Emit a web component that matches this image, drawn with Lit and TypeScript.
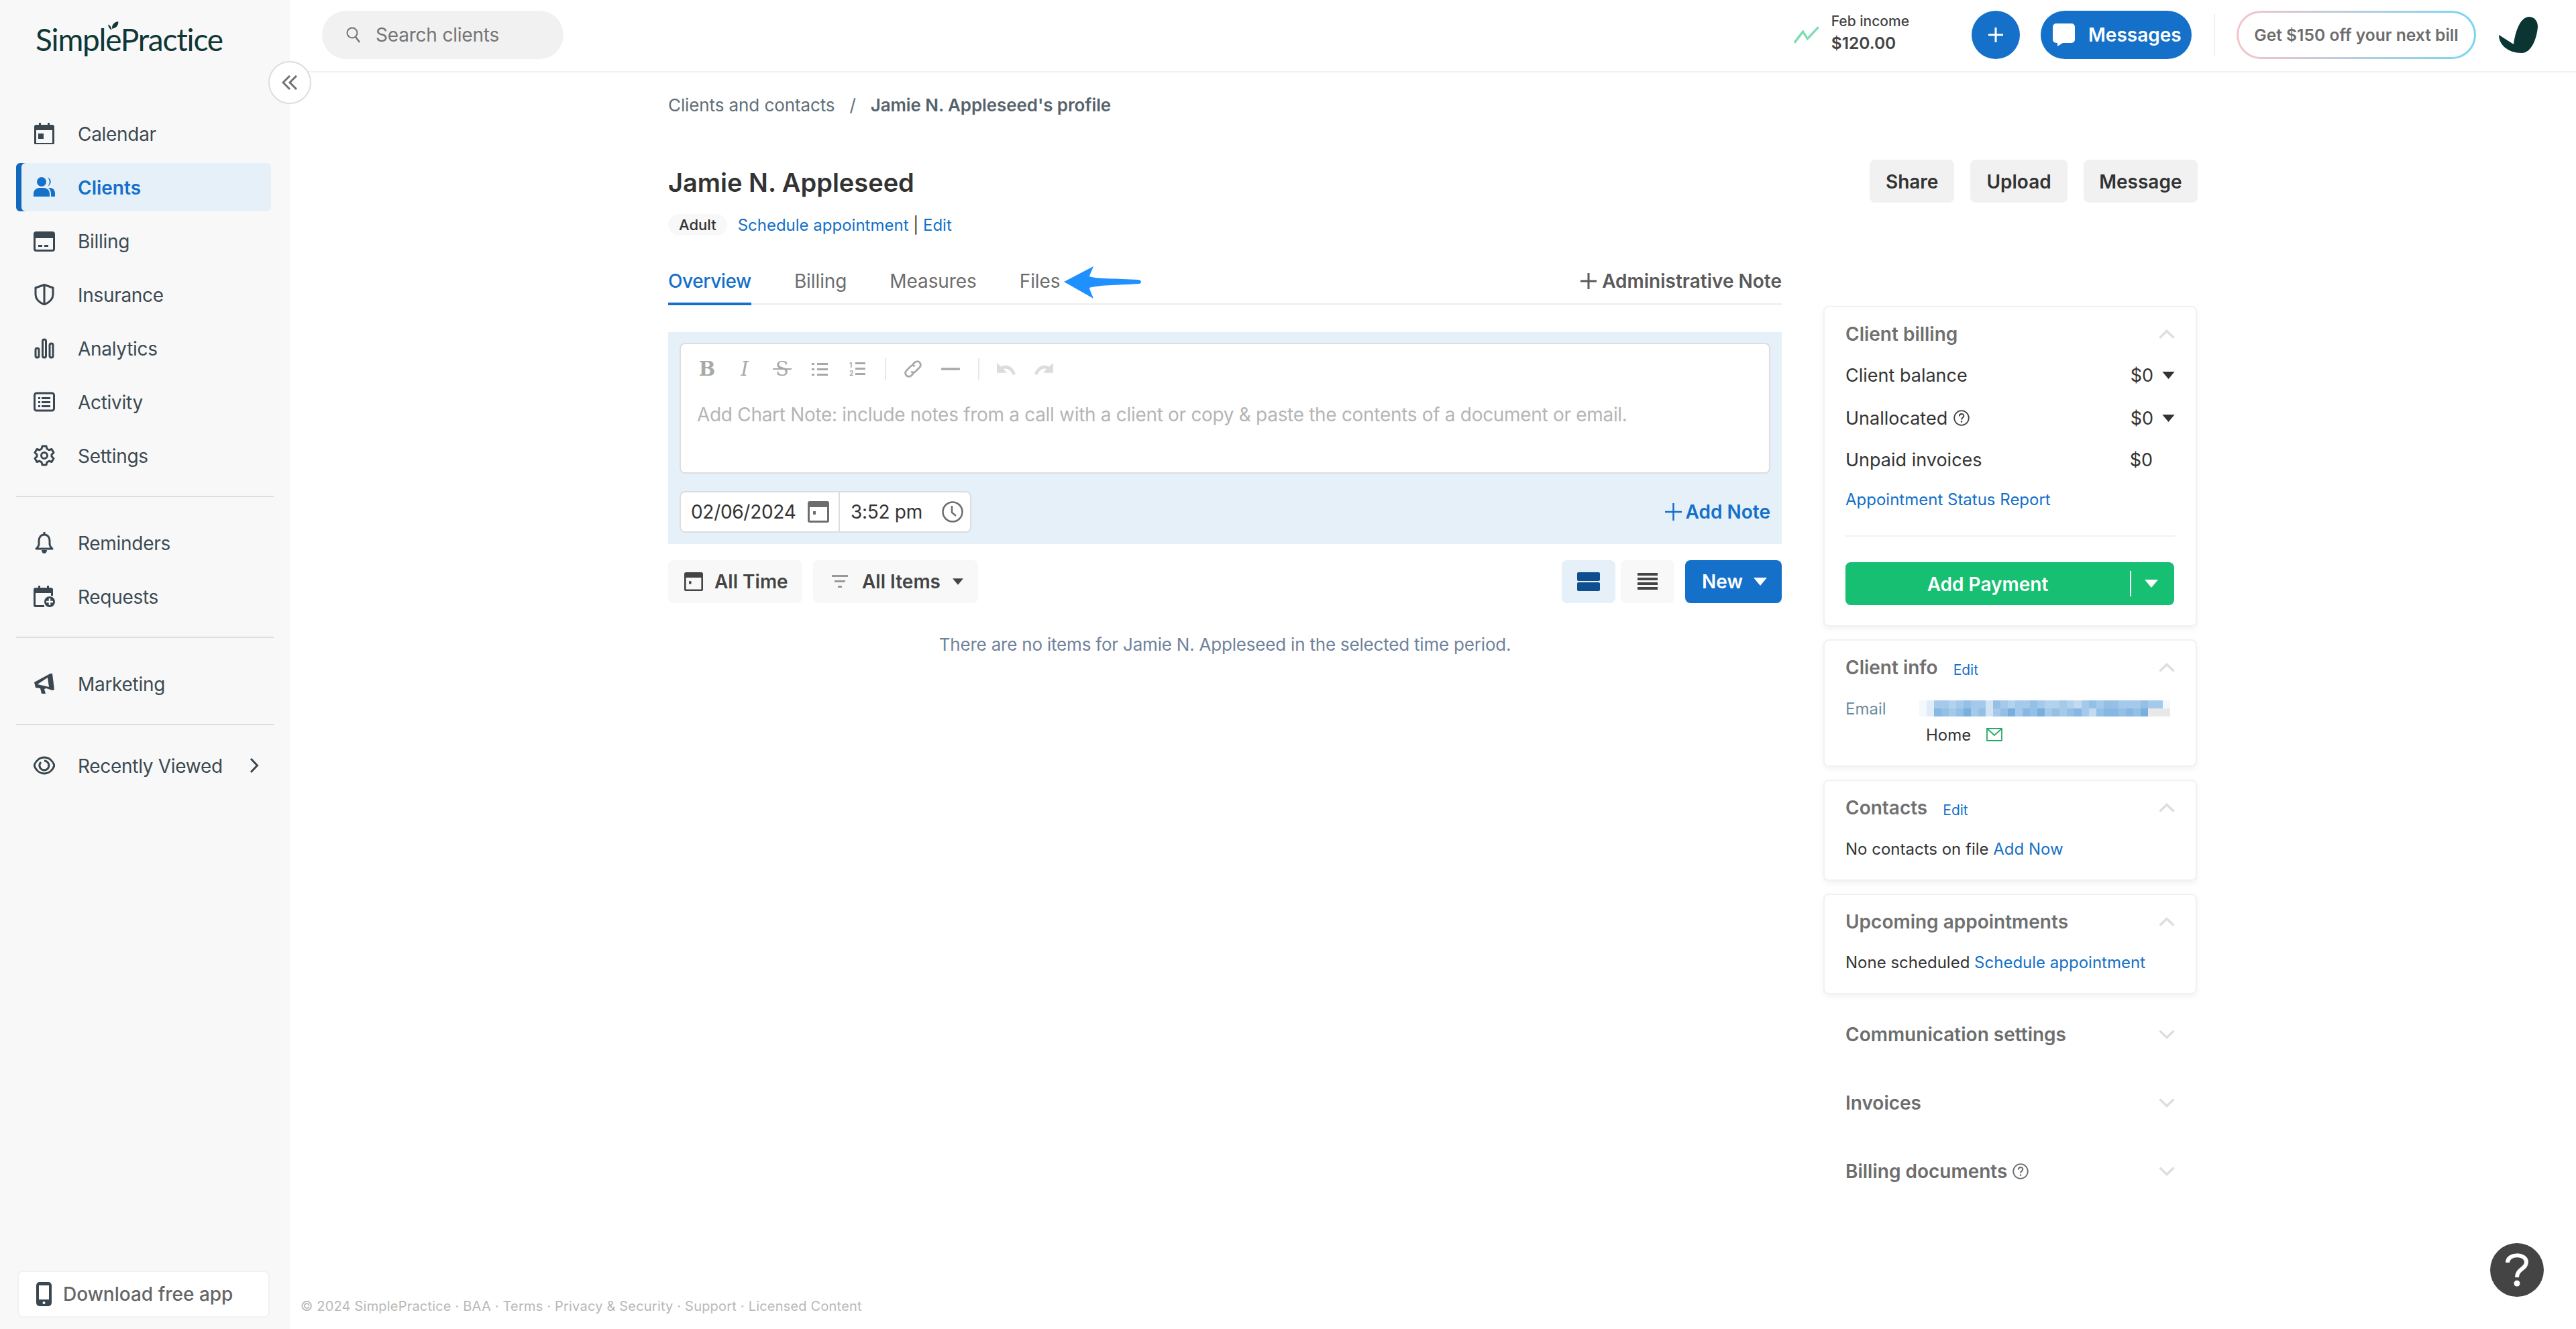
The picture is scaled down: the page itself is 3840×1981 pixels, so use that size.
import { LitElement, html, css, svg } from "lit";
import { customElement } from "lit/decorators.js";

const I = {
  calendar: svg`<path fill="currentColor" d="M8 0h3v3h10V0h3v3h4a3 3 0 0 1 3 3v24a3 3 0 0 1-3 3H4a3 3 0 0 1-3-3V6a3 3 0 0 1 3-3h4zM4 11v18.500a.5.500 0 0 0 .5.500h23a.5.500 0 0 0 .5-.5V11zm3 5h8v8H7z"/>`,
  clients: svg`<g fill="currentColor"><circle cx="12" cy="8" r="7"/><path d="M21 1.400a7 7 0 0 1 0 13.200 9 9 0 0 0 0-13.200z"/><path d="M0 28v-2c0-5.500 4-9 9-9h6c5 0 9 3.500 9 9v4H1a1 1 0 0 1-1-2z"/><path d="M22 17h2c5 0 8 3.500 8 8v5h-6v-4c0-3.500-1.500-7-4-9z"/></g>`,
  billing: svg`<path fill="currentColor" fill-rule="evenodd" d="M4 2h24a4 4 0 0 1 4 4v22a4 4 0 0 1-4 4H4a4 4 0 0 1-4-4V6a4 4 0 0 1 4-4zm-1 10v16a1 1 0 0 0 1 1h24a1 1 0 0 0 1-1V12zm4 10h6v3H7zm9 0h6v3h-6z"/>`,
  shield: svg`<path fill="none" stroke="currentColor" stroke-width="3" stroke-linejoin="round" d="M16 1.500 29 6v10c0 7-6 12-13 15C9 28 3 23 3 16V6z"/><path stroke="currentColor" stroke-width="3" d="M16 2v28"/>`,
  analytics: svg`<g fill="none" stroke="currentColor" stroke-width="3"><rect x="3" y="16" width="5" height="14" rx="2.500"/><rect x="13.500" y="3" width="5" height="27" rx="2.500"/><rect x="24" y="9" width="5" height="21" rx="2.500"/></g>`,
  activity: svg`<rect x="1.500" y="3" width="29" height="26" rx="3" fill="none" stroke="currentColor" stroke-width="3"/><path fill="currentColor" d="M7 9h3v3H7zm5 0h13v3H12zM7 15h3v3H7zm5 0h13v3H12zM7 21h3v3H7zm5 0h13v3H12z"/>`,
  gear: svg`<path fill="none" stroke="currentColor" stroke-width="3" stroke-linejoin="round" d="M13 2h6l1 4 3 1.700 4-1.200 3 5.200-3 2.800v3l3 2.800-3 5.200-4-1.200L20 26l-1 4h-6l-1-4-3-1.700-4 1.200-3-5.200 3-2.800v-3l-3-2.800 3-5.200 4 1.200L12 6z"/><circle cx="16" cy="16" r="4.500" fill="none" stroke="currentColor" stroke-width="3"/>`,
  bell: svg`<path fill="none" stroke="currentColor" stroke-width="3" stroke-linejoin="round" d="M16 4c-5 0-8 4-8 9v5c0 3-2 5-4 7h24c-2-2-4-4-4-7v-5c0-5-3-9-8-9z"/><path fill="currentColor" d="M14.500 0h3v4h-3zM12 27h8c0 3-2 5-4 5s-4-2-4-5z"/>`,
  request: svg`<path fill="currentColor" d="M7 0h3v3h10V0h3v3h3a3 3 0 0 1 3 3v9h-3v-4H3v17a1 1 0 0 0 1 1h12v3H3a3 3 0 0 1-3-3V6a3 3 0 0 1 3-3h4z"/><circle cx="24" cy="24" r="8" fill="currentColor"/><path stroke="#fff" stroke-width="2.500" d="M24 19v10M19 24h10"/>`,
  megaphone: svg`<path fill="currentColor" d="M1 14 25 1l3 0 3 24-3 1-9-3-3 1 2 7-6 0-2-8-7-1-1-4zm5 3 17 4-2-14z"/>`,
  eye: svg`<path fill="none" stroke="currentColor" stroke-width="3" d="M16 4c8 0 13 6 15 12-2 6-7 12-15 12S3 22 1 16C3 10 8 4 16 4z"/><path fill="none" stroke="currentColor" stroke-width="3" d="M16 9a7 7 0 1 1-5 2"/>`,
};

const icon = (p: unknown, size = 32, cls = "") =>
  html`<svg class=${cls} width=${size} height=${size} viewBox="0 0 32 32" aria-hidden="true">${p}</svg>`;

const caret = (w = 20, cls = "") =>
  html`<svg class=${cls} width=${w} height=${Math.round(w * 0.6)} viewBox="0 0 20 12" aria-hidden="true"><path fill="currentColor" d="M0 0h20L10 12z"/></svg>`;

const chev = (up: boolean) =>
  html`<svg class="chev" width="24" height="14" viewBox="0 0 24 14" aria-hidden="true"><path fill="none" stroke="#dedede" stroke-width="3.500" d=${up ? "M1.500 12.500 12 2.500l10.500 10" : "M1.500 1.500 12 11.500l10.500-10"}/></svg>`;

const qmark = (size = 24) =>
  html`<svg class="q" width=${size} height=${size} viewBox="0 0 24 24" aria-hidden="true"><circle cx="12" cy="12" r="10.800" fill="none" stroke="currentColor" stroke-width="1.800"/><path fill="none" stroke="currentColor" stroke-width="2" d="M8.800 9.500c0-4.500 6.600-4.500 6.600-.5 0 2.500-3.400 2.700-3.400 5.500"/><circle cx="12" cy="17.500" r="1.300" fill="currentColor"/></svg>`;

const blurA = "0 1 5 5 4 5 6 5 5 2 6 5 4 5 5 6 5 4 4 5 4 3 5 6 5 6 6 5 5 5 6 5 5 0";
const blurB = "0 1 7 6 5 6 8 5 6 2 5 6 8 5 7 6 8 5 6 5 6 7 5 3 6 7 7 6 7 6 8 9 9 9";

@customElement("app-root")
export class AppRoot extends LitElement {
  static styles = css`
    :host { display: block; font-family: Inter, "Liberation Sans", sans-serif; color: #333; }
    * { box-sizing: border-box; }
    a { color: #1470c8; text-decoration: none; }
    .app { position: relative; display: flex; width: 3840px; height: 1981px; overflow: hidden; background: #fff; }

    .side { width: 432px; flex: none; background: #f8f8f8; display: flex; flex-direction: column; padding: 0 24px 17px; }
    .logo-wrap { height: 163px; padding: 28px 0 0 29px; }
    .logo { position: relative; display: inline-block; font: 400 46px/62px Lato, sans-serif; color: #0f3735; letter-spacing: -1.2px; }
    .logo svg { position: absolute; left: 107px; top: 3px; }
    nav { display: flex; flex-direction: column; gap: 8px; }
    .item { height: 72px; width: 380px; display: flex; align-items: center; gap: 34px; padding-left: 26px; padding-right: 18px; font-size: 28px; letter-spacing: -0.3px; color: #3c4a52; border-radius: 6px; }
    .item svg { flex: none; color: #3a4750; }
    .item span { padding-top: 1px; }
    .item.on { background: #e6f0f9; box-shadow: inset 8px 0 0 #1268bb; color: #1470c8; font-weight: 600; letter-spacing: 0; }
    .item.on svg { color: #1470c8; }
    .item .more { margin-left: auto; }
    .sep { height: 2px; width: 384px; background: #dedede; }
    .sep.a { margin: 24px 0 32px; }
    .sep.b { margin: 24px 0; }
    .grow { flex: 1; }
    .download { height: 70px; width: 376px; margin-left: 2px; background: #fff; border: 2px solid #f1f1f1; border-radius: 8px; display: flex; align-items: center; gap: 17px; padding-left: 26px; font-size: 28px; font-weight: 500; color: #666; }

    .collapse { position: absolute; left: 400px; top: 91px; width: 64px; height: 64px; border-radius: 50%; background: #fff; border: 2px solid #ddd; display: flex; align-items: center; justify-content: center; color: #757575; }

    .main { flex: 1; min-width: 0; display: flex; flex-direction: column; }
    header { height: 108px; flex: none; display: flex; align-items: center; padding: 0 57px 3px 48px; border-bottom: 2px solid #f1f1f1; }
    .search { width: 360px; height: 72px; border-radius: 36px; background: #f1f1f1; display: flex; align-items: center; gap: 22px; padding-left: 36px; font-size: 28px; letter-spacing: -0.2px; color: #757575; }
    .income { margin-left: auto; display: flex; align-items: center; gap: 17px; width: 172px; }
    .income .tx { margin-bottom: 8px; }
    .income .t1 { font-size: 21px; font-weight: 500; line-height: 32px; color: #444; white-space: nowrap; }
    .income .t2 { font-size: 24.500px; font-weight: 600; line-height: 32px; color: #444; }
    .plus { width: 72px; height: 72px; margin-left: 93px; border-radius: 50%; background: #1470c8; display: flex; align-items: center; justify-content: center; }
    .msg { width: 225px; height: 72px; margin-left: 31px; border-radius: 36px; background: #1470c8; color: #fff; font-size: 28px; font-weight: 600; display: flex; align-items: center; gap: 20px; padding-left: 18px; }
    .vbar { width: 2px; height: 64px; background: #f1f1f1; margin: 0 32px 0 33px; }
    .promo { width: 357px; height: 72px; border-radius: 36px; border: 3px solid transparent; background: linear-gradient(#fff, #fff) padding-box, linear-gradient(90deg, #f5c4ca, #76d6f2) border-box; display: flex; align-items: center; justify-content: center; font-size: 24.600px; font-weight: 600; color: #6d6d6d; white-space: nowrap; }
    .mark { margin-left: 34px; flex: none; }

    .page { flex: 1; min-height: 0; padding: 32px 0 0 564px; display: flex; flex-direction: column; }
    .crumb { height: 34px; line-height: 34px; font-size: 26px; letter-spacing: -0.1px; color: #5f6e78; display: flex; gap: 22px; }
    .crumb b { font-weight: 600; color: #56626b; }
    .title { width: 2280px; height: 145px; margin-top: 64px; display: flex; justify-content: space-between; }
    h1 { margin: 10px 0 -1px; font-size: 38px; line-height: 48px; font-weight: 600; color: #333; }
    .meta { margin-top: 24px; display: flex; align-items: center; gap: 16px; font-size: 24px; }
    .badge { height: 32px; padding: 0 16px; border-radius: 16px; background: #f8f8f8; font-size: 22px; font-weight: 500; line-height: 32px; color: #333; }
    .btns { display: flex; gap: 24px; }
    .btn { height: 64px; padding: 2px 24px 0; border-radius: 8px; background: #f1f1f1; font-size: 28px; font-weight: 600; color: #333; display: flex; align-items: center; }
    .btn:last-child { padding: 2px 23.500px 0; }

    .cols { display: flex; gap: 62px; width: 2280px; }
    .left { width: 1660px; flex: none; }
    .right { width: 557px; flex: none; padding-top: 73px; margin-top: 0; }

    .tabs { height: 72px; display: flex; align-items: center; border-bottom: 3px solid #f1f1f1; font-size: 28px; letter-spacing: -0.1px; color: #6d6d6d; padding-top: 3px; }
    .tabs span { margin-right: 64px; }
    .tabs .cur { position: relative; color: #1470c8; font-weight: 500; letter-spacing: -0.4px; }
    .tabs .cur::after { content: ""; position: absolute; left: 0; right: 0; bottom: -19px; height: 4px; background: #1470c8; }
    .tabs .admin { margin: 0 0 0 auto; display: flex; align-items: center; gap: 8px; font-weight: 600; letter-spacing: 0; color: #5a5a5a; white-space: nowrap; }

    .panel { margin-top: 40px; height: 316px; background: #e6f0f9; padding: 16px 17px 17px; }
    .editor { height: 195px; border: 2px solid #ddd; border-radius: 8px; background: #fff; }
    .tools { height: 40px; margin-top: 17px; padding-left: 25px; display: flex; align-items: center; gap: 28px; color: #a8a8a8; }
    .tools .s { width: 28px; height: 28px; display: flex; align-items: center; justify-content: center; font: 700 29px/28px "DejaVu Serif", serif; position: relative; }
    .tools .s.it { font-style: italic; font-weight: 400; }
    .tools .s.fade { color: #dcdcdc; }
    .tools .s.st { font-weight: 400; }
    .tools .s.st::after { content: ""; position: absolute; left: 0; right: 0; top: 13px; height: 2px; background: currentColor; }
    .tools .div { width: 2px; height: 32px; background: #e6e6e6; margin: 0 -2px 0 -1px; }
    .ph { margin: 31px 0 0 24px; font-size: 28px; letter-spacing: -0.31px; line-height: 34px; color: #b5b5b5; white-space: nowrap; }
    .noterow { margin-top: 26px; display: flex; justify-content: space-between; align-items: center; }
    .dt { height: 62px; width: 435px; border: 2px solid #ddd; border-radius: 8px; background: #fff; display: flex; font-size: 28px; letter-spacing: -0.3px; color: #333; }
    .dt > div { display: flex; align-items: center; justify-content: space-between; }
    .dt .d { width: 237px; padding: 0 14px 0 15px; border-right: 2px solid #ddd; }
    .dt .t { flex: 1; padding: 0 10px 0 16px; }
    .dt svg { color: #6d6d6d; }
    .add { display: flex; align-items: center; gap: 6px; color: #1470c8; font-size: 28px; font-weight: 600; }

    .filters { margin-top: 24px; height: 64px; display: flex; gap: 16px; }
    .f { height: 64px; border-radius: 8px; background: #f8f8f8; display: flex; align-items: center; font-size: 28px; font-weight: 600; color: #444; }
    .f.time { width: 200px; padding-left: 24px; gap: 17px; }
    .f.items { width: 246px; padding-left: 28px; gap: 21px; }
    .f.items .c { margin-left: -3px; }
    .view { width: 80px; justify-content: center; }
    .view.on { background: #e6f0f9; margin-left: auto; margin-right: -8px; }
    .new { width: 144px; height: 64px; border-radius: 8px; background: #1470c8; color: #fff; font-size: 28px; font-weight: 600; display: flex; align-items: center; gap: 16px; padding-left: 25px; }
    .empty { margin-top: 44px; text-align: center; font-size: 26px; letter-spacing: -0.2px; line-height: 36px; color: #6f829b; }

    .card { border: 2px solid #f1f1f1; border-radius: 8px; background: #fff; box-shadow: 0 4px 8px rgba(0, 0, 0, 0.05); padding: 21px 31px 29px; margin-bottom: 19px; }
    .card.billing { padding-bottom: 30px; }
    .head { height: 36px; padding-top: 2px; display: flex; align-items: center; font-size: 28px; font-weight: 600; color: #707070; gap: 23px; white-space: nowrap; }
    .head a { font-size: 21px; font-weight: 400; margin-top: 6px; }
    .head .chev { margin-left: auto; }
    .row { height: 36px; padding-top: 2px; display: flex; align-items: center; font-size: 27px; color: #333; }
    .row .q { margin-left: 9px; color: #444; }
    .amt { margin-left: auto; display: flex; align-items: center; gap: 13px; }
    .amt.solo { margin-right: 33px; }
    .r1 { margin-top: 25px; }
    .r2 { margin-top: 28px; }
    .r3 { margin-top: 26px; }
    .r4 { margin-top: 24px; }
    .link { margin-top: 25px; height: 36px; line-height: 36px; font-size: 24px; }
    .rule { height: 2px; background: #f1f1f1; margin: 35px 0 38px; }
    .pay { width: 490px; height: 64px; border-radius: 8px; background: #17bf73; color: #fff; font-size: 28px; font-weight: 600; display: flex; align-items: center; }
    .pay .lbl { width: 424px; padding-top: 2px; text-align: center; }
    .pay .bar { width: 2px; height: 38px; background: #fff; margin-right: 20px; }
    .lab { width: 110px; color: #6e8ca0; }
    .row.small { font-size: 24px; }
    .blur { display: flex; flex-direction: column; }
    .blur div { display: flex; height: 12px; }
    .blur i { width: 11px; height: 12px; display: block; }
    .home { margin: 3px 0 0 120px; gap: 23px; }
    .acc { height: 102px; padding: 0 33px; display: flex; align-items: center; font-size: 28px; font-weight: 600; color: #6d6d6d; }
    .acc .chev { margin-left: auto; }
    .acc .q { margin-left: 8px; }
    .accs { margin-top: -10px; }

    .copy { height: 47px; margin: auto 0 0 -548px; padding-bottom: 21px; font-size: 20px; letter-spacing: 0.2px; line-height: 26px; color: #b8b8b8; white-space: nowrap; }
    .arrow { position: absolute; left: 1584px; top: 395px; }
    .help { position: absolute; left: 3712px; top: 1853px; width: 80px; height: 80px; border-radius: 50%; background: #444; display: flex; align-items: center; justify-content: center; }
  `;

  private nav(p: unknown, label: string, on = false, more = false) {
    return html`<div class="item ${on ? "on" : ""}">${icon(p)}<span>${label}</span>
      ${more
        ? html`<svg class="more" width="14" height="24" viewBox="0 0 14 24" aria-hidden="true"><path fill="none" stroke="#3a4750" stroke-width="3" d="M2 2l9.500 10L2 22"/></svg>`
        : ""}</div>`;
  }

  private blurRow(d: string) {
    return html`<div>${d.split(" ").map((v) => {
      const n = Number(v);
      const col = n === 9 ? "#e8e8e8" : `hsl(208 62% ${n === 0 ? 97 : 96 - n * 3.6}%)`;
      return html`<i style="background:${col}"></i>`;
    })}</div>`;
  }

  render() {
    return html`<div class="app">
      <aside class="side">
        <div class="logo-wrap"><span class="logo">SimplePractice<svg width="18" height="18" viewBox="0 0 20 20" aria-hidden="true"><path fill="#0f3735" d="M8 13C7 7 11 2 18 1c1 6-3 11-10 12zM1 6c3 1 6 4 6 9C4 14 2 10 1 6z"/></svg></span></div>
        <nav>
          ${this.nav(I.calendar, "Calendar")}
          ${this.nav(I.clients, "Clients", true)}
          ${this.nav(I.billing, "Billing")}
          ${this.nav(I.shield, "Insurance")}
          ${this.nav(I.analytics, "Analytics")}
          ${this.nav(I.activity, "Activity")}
          ${this.nav(I.gear, "Settings")}
        </nav>
        <div class="sep a"></div>
        <nav>${this.nav(I.bell, "Reminders")}${this.nav(I.request, "Requests")}</nav>
        <div class="sep a"></div>
        ${this.nav(I.megaphone, "Marketing")}
        <div class="sep b"></div>
        ${this.nav(I.eye, "Recently Viewed", false, true)}
        <div class="grow"></div>
        <div class="download">
          <svg width="23" height="36" viewBox="0 0 23 36" aria-hidden="true"><rect width="23" height="36" rx="5" fill="#3a4750"/><rect x="4" y="5" width="15" height="21" fill="#fff"/><circle cx="11.500" cy="31" r="2" fill="#fff"/></svg>
          <span>Download free app</span>
        </div>
      </aside>

      <div class="collapse"><svg width="24" height="22" viewBox="0 0 24 22" aria-hidden="true"><path fill="none" stroke="currentColor" stroke-width="3" d="M12 1 2 11l10 10M22 1 12 11l10 10"/></svg></div>

      <div class="main">
        <header>
          <div class="search">
            <svg width="22" height="24" viewBox="0 0 22 24" aria-hidden="true"><circle cx="9" cy="9" r="7.500" fill="none" stroke="#757575" stroke-width="2"/><path stroke="#757575" stroke-width="2.500" d="M14 15l6 8"/></svg>
            <span>Search clients</span>
          </div>
          <div class="income">
            <svg width="40" height="26" viewBox="0 0 40 26" aria-hidden="true"><path fill="none" stroke="#7ddcb0" stroke-width="3.500" d="M1 25 14 8l7 11L38 1"/></svg>
            <div class="tx"><div class="t1">Feb income</div><div class="t2">$120.00</div></div>
          </div>
          <div class="plus"><svg width="24" height="24" viewBox="0 0 24 24" aria-hidden="true"><path stroke="#fff" stroke-width="3" d="M12 1v22M1 12h22"/></svg></div>
          <div class="msg">
            <svg width="33" height="34" viewBox="0 0 33 34" aria-hidden="true"><path fill="#fff" d="M5 0h23a5 5 0 0 1 5 5v19a5 5 0 0 1-5 5H15L7 34v-5H5a5 5 0 0 1-5-5V5a5 5 0 0 1 5-5z"/></svg>
            <span>Messages</span>
          </div>
          <div class="vbar"></div>
          <div class="promo">Get $150 off your next bill</div>
          <svg class="mark" width="58" height="54" viewBox="0 0 58 54" aria-hidden="true"><path fill="#0a3533" d="M44 0c9 0 14 6 14 15-1 14-8 39-24 39C14 54 0 42 0 27l22 14C24 26 30 2 44 0z"/></svg>
        </header>

        <div class="page">
          <div class="crumb"><span>Clients and contacts</span><span>/</span><b>Jamie N. Appleseed's profile</b></div>
          <div class="title">
            <div>
              <h1>Jamie N. Appleseed</h1>
              <div class="meta"><span class="badge">Adult</span><span><a>Schedule appointment</a> | <a>Edit</a></span></div>
            </div>
            <div class="btns"><div class="btn">Share</div><div class="btn">Upload</div><div class="btn">Message</div></div>
          </div>

          <div class="cols">
            <div class="left">
              <div class="tabs">
                <span class="cur">Overview</span><span>Billing</span><span>Measures</span><span>Files</span>
                <span class="admin"><svg width="24" height="24" viewBox="0 0 24 24" aria-hidden="true"><path stroke="#5a5a5a" stroke-width="3" d="M12 0v24M0 12h24"/></svg>Administrative Note</span>
              </div>

              <div class="panel">
                <div class="editor">
                  <div class="tools">
                    <span class="s">B</span>
                    <span class="s it">I</span>
                    <span class="s st">S</span>
                    <span class="s"><svg width="26" height="22" viewBox="0 0 26 22" aria-hidden="true"><path fill="currentColor" d="M1 2h4v3H1zm8 0h16v3H9zM1 10h4v3H1zm8 0h16v3H9zM1 18h4v3H1zm8 0h16v3H9z"/></svg></span>
                    <span class="s"><svg width="24" height="24" viewBox="0 0 24 24" aria-hidden="true"><path fill="currentColor" d="M9 2h15v3H9zm0 8h15v3H9zm0 8h15v3H9z"/><text x="0" y="10" font-size="10" font-family="Inter" fill="currentColor">1</text><text x="0" y="22" font-size="10" font-family="Inter" fill="currentColor">2</text></svg></span>
                    <span class="div"></span>
                    <span class="s"><svg width="30" height="30" viewBox="0 0 30 30" aria-hidden="true"><g fill="none" stroke="currentColor" stroke-width="3"><path d="M13 10l4-5c3-3 7-3 9 0s1 6-1 8l-6 6c-2 2-5 2-7 0"/><path d="M17 20l-4 5c-3 3-7 3-9 0s-1-6 1-8l6-6c2-2 5-2 7 0"/></g></svg></span>
                    <span class="s"><svg width="34" height="4" viewBox="0 0 34 4" aria-hidden="true"><rect width="34" height="4" rx="1" fill="currentColor"/></svg></span>
                    <span class="div"></span>
                    <span class="s fade"><svg width="34" height="22" viewBox="0 0 34 22" aria-hidden="true"><path fill="currentColor" d="M0 0l8 7c7-5 19-4 26 13l-5 2C25 12 17 9 12 11l6 7H0z"/></svg></span>
                    <span class="s fade"><svg width="34" height="22" viewBox="0 0 34 22" aria-hidden="true"><path fill="currentColor" d="M34 0l-8 7C19 2 7 3 0 20l5 2C9 12 17 9 22 11l-6 7h18z"/></svg></span>
                  </div>
                  <div class="ph">Add Chart Note: include notes from a call with a client or copy &amp; paste the contents of a document or email.</div>
                </div>
                <div class="noterow">
                  <div class="dt">
                    <div class="d"><span>02/06/2024</span>
                      <svg width="32" height="32" viewBox="0 0 32 32" aria-hidden="true"><path fill="currentColor" fill-rule="evenodd" d="M3 0h26a3 3 0 0 1 3 3v26a3 3 0 0 1-3 3H3a3 3 0 0 1-3-3V3a3 3 0 0 1 3-3zm0 9v20h26V9zm5 6h4v5H8z"/></svg></div>
                    <div class="t"><span>3:52 pm</span>
                      <svg width="32" height="32" viewBox="0 0 32 32" aria-hidden="true"><circle cx="16" cy="16" r="14.500" fill="none" stroke="currentColor" stroke-width="2.500"/><path fill="none" stroke="currentColor" stroke-width="2.500" d="M15 7v10l6 5"/></svg></div>
                  </div>
                  <div class="add"><svg width="25" height="26" viewBox="0 0 25 26" aria-hidden="true"><path stroke="currentColor" stroke-width="2.500" d="M12.500 0v26M0 13h25"/></svg><span>Add Note</span></div>
                </div>
              </div>

              <div class="filters">
                <div class="f time"><svg width="28" height="28" viewBox="0 0 32 32" aria-hidden="true"><path fill="#444" fill-rule="evenodd" d="M3 0h26a3 3 0 0 1 3 3v26a3 3 0 0 1-3 3H3a3 3 0 0 1-3-3V3a3 3 0 0 1 3-3zm0 9v20h26V9zm5 6h4v5H8z"/></svg><span>All Time</span></div>
                <div class="f items"><svg width="24" height="20" viewBox="0 0 24 20" aria-hidden="true"><path fill="#999" d="M0 0h24v3H0zm4 8h16v3H4zm5 8h6v3H9z"/></svg><span>All Items</span>${caret(16, "c")}</div>
                <div class="f view on"><svg width="34" height="28" viewBox="0 0 34 28" aria-hidden="true"><rect width="34" height="13" rx="2" fill="#0f4f8f"/><rect y="15" width="34" height="13" rx="2" fill="#0f4f8f"/></svg></div>
                <div class="f view"><svg width="32" height="26" viewBox="0 0 32 26" aria-hidden="true"><path fill="#444" d="M1 0h30v4H1zm0 7h30v4H1zm0 7h30v4H1zm0 7h30v4H1z"/></svg></div>
                <div class="new"><span>New</span>${caret(20)}</div>
              </div>
              <div class="empty">There are no items for Jamie N. Appleseed in the selected time period.</div>
            </div>

            <div class="right">
              <section class="card billing">
                <div class="head"><span>Client billing</span>${chev(true)}</div>
                <div class="row r1"><span>Client balance</span><span class="amt"><span>$0</span>${caret(19)}</span></div>
                <div class="row r2"><span>Unallocated</span>${qmark(24)}<span class="amt"><span>$0</span>${caret(19)}</span></div>
                <div class="row r3"><span>Unpaid invoices</span><span class="amt solo"><span>$0</span></span></div>
                <div class="link"><a>Appointment Status Report</a></div>
                <div class="rule"></div>
                <div class="pay"><span class="lbl">Add Payment</span><span class="bar"></span>${caret(20)}</div>
              </section>
              <section class="card">
                <div class="head"><span>Client info</span><a>Edit</a>${chev(true)}</div>
                <div class="row r1 small"><span class="lab">Email</span><div class="blur">${this.blurRow(blurA)}${this.blurRow(blurB)}</div></div>
                <div class="row small home"><span>Home</span><svg width="24" height="20" viewBox="0 0 24 20" aria-hidden="true"><path fill="none" stroke="#2aa866" stroke-width="1.800" d="M1 1h22v18H1zM1 1l11 10L23 1"/></svg></div>
              </section>
              <section class="card">
                <div class="head"><span>Contacts</span><a>Edit</a>${chev(true)}</div>
                <div class="row r1 small"><span>No contacts on file&nbsp;<a>Add Now</a></span></div>
              </section>
              <section class="card">
                <div class="head"><span>Upcoming appointments</span>${chev(true)}</div>
                <div class="row small r4"><span>None scheduled&nbsp;<a>Schedule appointment</a></span></div>
              </section>
              <div class="accs">
                <div class="acc"><span>Communication settings</span>${chev(false)}</div>
                <div class="acc"><span>Invoices</span>${chev(false)}</div>
                <div class="acc"><span>Billing documents</span>${qmark(24)}${chev(false)}</div>
              </div>
            </div>
          </div>
          <div class="copy">© 2024 SimplePractice · BAA · Terms · Privacy &amp; Security · Support · Licensed Content</div>
        </div>
      </div>

      <svg class="arrow" width="120" height="52" viewBox="0 0 120 52" aria-hidden="true"><path fill="#1e90ff" d="M2 25 46 2c-3 8-6 13-6 15 10 4 40 3 74 5 4 2 4 5 0 6-34 2-62 2-74 6 0 2 3 8 6 16z"/></svg>

      <div class="help"><svg width="34" height="50" viewBox="0 0 34 50" aria-hidden="true"><path fill="none" stroke="#fff" stroke-width="6" stroke-linejoin="round" d="M3 14C3 0 31 0 31 13c0 11-14 10-14 23"/><circle cx="17" cy="45" r="4.500" fill="#fff"/></svg></div>
    </div>`;
  }
}
